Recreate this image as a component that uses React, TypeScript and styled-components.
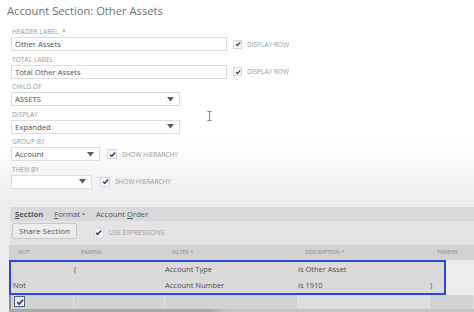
import { FC, ReactNode } from 'react'
import styled, { createGlobalStyle } from 'styled-components'

const GlobalStyle = createGlobalStyle`
	html, body {
		margin: 0;
		padding: 0;
		background: #ffffff;
	}
	body {
		font-family: 'Open Sans', 'Liberation Sans', sans-serif;
	}
`

type Row = { not: string; open: string; filter: string; description: string; close: string }

const rows: Row[] = [
	{ not: '', open: '(', filter: 'Account Type', description: 'is Other Asset', close: '' },
	{ not: 'Not', open: '', filter: 'Account Number', description: 'is 1910', close: ')' },
]

const Check: FC<{ size?: number; $entry?: boolean }> = ({ size = 9, $entry }) => (
	<CheckBox $size={size} $entry={$entry}>
		<svg width={size - 3} height={size - 3} viewBox='0 0 10 10'>
			<path d='M1.5 5.2 L4 7.6 L8.8 2.2' fill='none' stroke='#2c3a5a' strokeWidth='2' />
		</svg>
	</CheckBox>
)

const Arrow: FC = () => (
	<svg width='7' height='5' viewBox='0 0 7 5'>
		<path d='M0 0 H7 L3.5 4.5 Z' fill='#555b66' />
	</svg>
)

const Field: FC<{ label: ReactNode; children: ReactNode }> = ({ label, children }) => (
	<FieldBlock>
		<FieldLabel>{label}</FieldLabel>
		<FieldRow>{children}</FieldRow>
	</FieldBlock>
)

export default function App() {
	return (
		<>
			<GlobalStyle />
			<Page>
				<Title>Account Section: Other Assets</Title>
				<Form>
					<Field label={<>HEADER LABEL <Req>*</Req></>}>
						<TextInput $width={216}>Other Assets</TextInput>
						<CheckLabel $gap={6}>
							<Check />
							DISPLAY ROW
						</CheckLabel>
					</Field>
					<Field label='TOTAL LABEL'>
						<TextInput $width={216}>Total Other Assets</TextInput>
						<CheckLabel $gap={6}>
							<Check />
							DISPLAY ROW
						</CheckLabel>
					</Field>
					<Field label='CHILD OF'>
						<Select $width={169}>
							ASSETS
							<Arrow />
						</Select>
					</Field>
					<Field label='DISPLAY'>
						<Select $width={169}>
							Expanded
							<Arrow />
						</Select>
					</Field>
					<Field label='GROUP BY'>
						<Select $width={89}>
							Account
							<Arrow />
						</Select>
						<CheckLabel $gap={7}>
							<Check size={10} />
							SHOW HIERARCHY
						</CheckLabel>
					</Field>
					<Field label='THEN BY'>
						<Select $width={81}>
							<span />
							<Arrow />
						</Select>
						<CheckLabel $gap={8}>
							<Check size={10} />
							SHOW HIERARCHY
						</CheckLabel>
					</Field>
				</Form>

				<Cursor width='5' height='10' viewBox='0 0 5 10'>
					<path d='M0.5 0.5 H4.5 M2.5 0.5 V9.5 M0.5 9.5 H4.5' stroke='#8a8a8a' strokeWidth='1' fill='none' />
				</Cursor>

				<Sublist>
					<TabBar>
						<Tab $active>
							<u>S</u>ection
						</Tab>
						<Tab>
							<u>F</u>ormat •
						</Tab>
						<Tab>
							Account <u>O</u>rder
						</Tab>
					</TabBar>
					<Toolbar>
						<Button>Share Section</Button>
						<CheckLabel $gap={5}>
							<Check size={10} />
							USE EXPRESSIONS
						</CheckLabel>
					</Toolbar>
					<Table>
						<HeadRow>
							<HeadCell>NOT</HeadCell>
							<HeadCell>PARENS</HeadCell>
							<HeadCell>FILTER *</HeadCell>
							<HeadCell>DESCRIPTION *</HeadCell>
							<HeadCell>PARENS</HeadCell>
						</HeadRow>
						<Selection>
							{rows.map((r, i) => (
								<DataRow key={i}>
									<Cell>{r.not}</Cell>
									<Cell>{r.open}</Cell>
									<Cell>{r.filter}</Cell>
									<Cell>{r.description}</Cell>
									<Cell>{r.close}</Cell>
								</DataRow>
							))}
						</Selection>
						<EntryRow>
							<EntryCell>
								<Check size={11} $entry />
							</EntryCell>
							<EntryCell />
							<EntryCell />
							<EntryCell $light />
							<EntryCell />
						</EntryRow>
						<BottomStrip />
					</Table>
				</Sublist>
			</Page>
		</>
	)
}

const Page = styled.div`
	position: relative;
	width: 474px;
	height: 312px;
	overflow: hidden;
	background: linear-gradient(to bottom, #ffffff 0, #ffffff 140px, #ededed 200px, #ececec 312px);
`

const Title = styled.h1`
	margin: 0;
	padding: 4px 0 0 7px;
	height: 14px;
	font-size: 11.2px;
	line-height: 14px;
	font-weight: 400;
	color: #707070;
	white-space: nowrap;
`

const Form = styled.div`
	display: flex;
	flex-direction: column;
	gap: 3.5px;
	padding: 9px 0 0 11px;
`

const FieldBlock = styled.div`
	display: flex;
	flex-direction: column;
	gap: 1px;
`

const FieldLabel = styled.div`
	height: 9px;
	padding-left: 1px;
	font-size: 6.5px;
	line-height: 9px;
	color: #979797;
	letter-spacing: 0.1px;
	white-space: nowrap;
`

const Req = styled.span`
	color: #d08a2a;
	margin-left: 2px;
`

const FieldRow = styled.div`
	display: flex;
	align-items: center;
	height: 14px;
`

const TextInput = styled.div<{ $width: number }>`
	box-sizing: border-box;
	width: ${(p) => p.$width}px;
	height: 14px;
	padding: 0 3px;
	border: 1px solid #dedede;
	background: #ffffff;
	font-size: 7.7px;
	line-height: 12px;
	color: #505050;
	white-space: nowrap;
`

const Select = styled(TextInput)`
	display: flex;
	align-items: center;
	justify-content: space-between;
	padding: 0 5px 0 3px;
`

const CheckLabel = styled.div<{ $gap: number }>`
	display: flex;
	align-items: center;
	gap: 5px;
	margin-left: ${(p) => p.$gap}px;
	font-size: 6.5px;
	color: #979797;
	white-space: nowrap;
`

const CheckBox = styled.span<{ $size: number; $entry?: boolean }>`
	box-sizing: border-box;
	display: inline-flex;
	align-items: center;
	justify-content: center;
	width: ${(p) => p.$size}px;
	height: ${(p) => p.$size}px;
	border: 1px solid ${(p) => (p.$entry ? '#4a5f8a' : '#d4d8e0')};
	background: ${(p) => (p.$entry ? '#e8ecf4' : '#f7f8fb')};
`

const Cursor = styled.svg`
	position: absolute;
	left: 207px;
	top: 111px;
`

const Sublist = styled.div`
	margin: 18px 0 0 10px;
`

const TabBar = styled.div`
	display: flex;
	align-items: center;
	gap: 11px;
	height: 14px;
	padding-left: 5px;
	background: #d9d9db;
`

const Tab = styled.span<{ $active?: boolean }>`
	font-size: 7.7px;
	color: #555555;
	font-weight: ${(p) => (p.$active ? 700 : 400)};
	white-space: nowrap;
	u {
		text-decoration-thickness: 0.6px;
	}
`

const Toolbar = styled.div`
	display: flex;
	align-items: center;
	gap: 12px;
	height: 24px;
	padding-left: 2px;
	background: #e4e4e4;
`

const Button = styled.div`
	box-sizing: border-box;
	height: 16px;
	padding: 0 6px;
	margin-top: -4px;
	border: 1px solid #c9c9c9;
	border-radius: 2px;
	background: #ececec;
	font-size: 8px;
	line-height: 14px;
	color: #555555;
	white-space: nowrap;
`

const Table = styled.div`
	display: flex;
	flex-direction: column;
	margin-left: -1px;
`

const columns = '63px 91px 133px 132px 1fr'

const HeadRow = styled.div`
	display: grid;
	grid-template-columns: ${columns};
	height: 15px;
	align-items: center;
	background: #d2d2d2;
`

const HeadCell = styled.div`
	padding-left: 9px;
	font-size: 5.5px;
	color: #8a8a8a;
	white-space: nowrap;
`

const Selection = styled.div`
	width: 437px;
	box-sizing: border-box;
	border: 2px solid #2a46d8;
	background: #dadada;
`

const DataRow = styled.div`
	display: grid;
	grid-template-columns: 61px 91px 133px 132px 1fr;
	height: 15.5px;
	align-items: center;
`

const Cell = styled.div`
	padding-left: 2px;
	font-size: 7.5px;
	color: #4e4e4e;
	white-space: nowrap;
`

const EntryRow = styled.div`
	display: grid;
	grid-template-columns: ${columns};
	height: 14px;
	background: #d3d3d3;
	border-left: 2px solid #8c8c8c;
`

const EntryCell = styled.div<{ $light?: boolean }>`
	display: flex;
	align-items: center;
	padding-left: 3px;
	border-right: 1px solid #e2e2e2;
	background: ${(p) => (p.$light ? '#dedede' : 'transparent')};
`

const BottomStrip = styled.div`
	height: 4px;
	background: linear-gradient(to right, #a9a9a9 0, #a9a9a9 200px, #c4c4c4 220px, #c4c4c4 100%);
`
